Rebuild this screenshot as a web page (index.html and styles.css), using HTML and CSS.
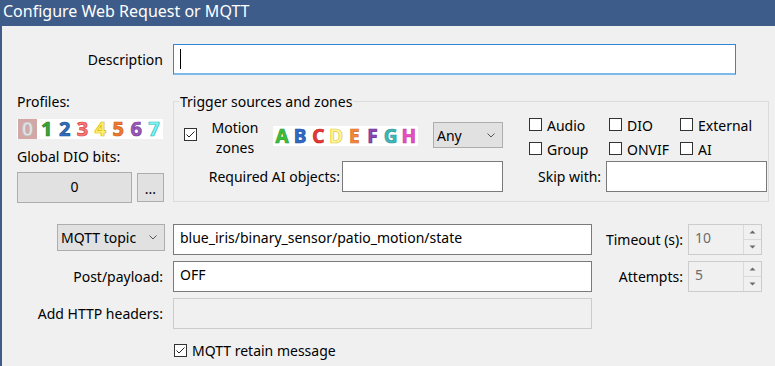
FILE: index.html
```html
<!DOCTYPE html>
<html>
<head>
<meta charset="utf-8">
<title>Configure Web Request or MQTT</title>
<link rel="stylesheet" href="styles.css">
</head>
<body>
<div class="titlebar">Configure Web Request or MQTT</div>
<div class="content">
  <div class="desc-row">
    <div class="desc-label">Description</div>
    <div class="textbox focused desc-input"><span class="caret"></span></div>
  </div>

  <div class="middle">
    <div class="left-col">
      <div class="line">Profiles:</div>
      <div class="profiles">
        <span class="pd p0">0</span><span class="pd p1">1</span><span class="pd p2">2</span><span class="pd p3">3</span><span class="pd p4">4</span><span class="pd p5">5</span><span class="pd p6">6</span><span class="pd p7">7</span>
      </div>
      <div class="line dio-label">Global DIO bits:</div>
      <div class="dio-row">
        <div class="button dio-btn">0</div>
        <div class="button dots-btn">...</div>
      </div>
    </div>

    <fieldset class="group">
      <legend>Trigger sources and zones</legend>
      <div class="grp-row1">
        <span class="checkbox motion-cb"><svg viewBox="0 0 11 11" width="11" height="11"><path d="M1.5 5.5 L4 8 L9.5 2.5" fill="none" stroke="#222" stroke-width="1"/></svg></span>
        <div class="motion-label">Motion<br>zones</div>
        <div class="zones"><span class="z za">A</span><span class="z zb">B</span><span class="z zc">C</span><span class="z zd">D</span><span class="z ze">E</span><span class="z zf">F</span><span class="z zg">G</span><span class="z zh">H</span></div>
        <div class="select any-select"><span>Any</span><svg class="chev" viewBox="0 0 8 5" width="8" height="5"><path d="M0.5 0.5 L4 4 L7.5 0.5" fill="none" stroke="#555" stroke-width="1"/></svg></div>
        <div class="cb-grid">
          <div class="cb-item"><span class="checkbox"></span><span class="cb-text">Audio</span></div>
          <div class="cb-item"><span class="checkbox"></span><span class="cb-text">DIO</span></div>
          <div class="cb-item"><span class="checkbox"></span><span class="cb-text">External</span></div>
          <div class="cb-item"><span class="checkbox"></span><span class="cb-text">Group</span></div>
          <div class="cb-item"><span class="checkbox"></span><span class="cb-text">ONVIF</span></div>
          <div class="cb-item"><span class="checkbox"></span><span class="cb-text">AI</span></div>
        </div>
      </div>
      <div class="grp-row2">
        <div class="req-label">Required AI objects:</div>
        <div class="textbox req-input"></div>
        <div class="skip-label">Skip with:</div>
        <div class="textbox skip-input"></div>
      </div>
    </fieldset>
  </div>

  <div class="form-grid">
    <div class="select topic-select"><span>MQTT topic</span><svg class="chev" viewBox="0 0 8 5" width="8" height="5"><path d="M0.5 0.5 L4 4 L7.5 0.5" fill="none" stroke="#555" stroke-width="1"/></svg></div>
    <div class="textbox">blue_iris/binary_sensor/patio_motion/state</div>
    <div class="label right-label">Timeout (s):</div>
    <div class="spin"><span class="spin-val">10</span><div class="spin-btns"><span class="spin-up"><svg viewBox="0 0 7 4" width="7" height="4"><path d="M0.5 3.5 L3.5 0.5 L6.5 3.5 Z" fill="#6a6a6a"/></svg></span><span class="spin-down"><svg viewBox="0 0 7 4" width="7" height="4"><path d="M0.5 0.5 L3.5 3.5 L6.5 0.5 Z" fill="#6a6a6a"/></svg></span></div></div>

    <div class="label">Post/payload:</div>
    <div class="textbox">OFF</div>
    <div class="label right-label">Attempts:</div>
    <div class="spin"><span class="spin-val">5</span><div class="spin-btns"><span class="spin-up"><svg viewBox="0 0 7 4" width="7" height="4"><path d="M0.5 3.5 L3.5 0.5 L6.5 3.5 Z" fill="#6a6a6a"/></svg></span><span class="spin-down"><svg viewBox="0 0 7 4" width="7" height="4"><path d="M0.5 0.5 L3.5 3.5 L6.5 0.5 Z" fill="#6a6a6a"/></svg></span></div></div>

    <div class="label">Add HTTP headers:</div>
    <div class="textbox disabled"></div>
  </div>

  <div class="retain">
    <span class="checkbox"><svg viewBox="0 0 11 11" width="11" height="11"><path d="M1.5 5.5 L4 8 L9.5 2.5" fill="none" stroke="#222" stroke-width="1"/></svg></span>
    <span class="cb-text">MQTT retain message</span>
  </div>
</div>
</body>
</html>
```

FILE: styles.css
```css
* { box-sizing: border-box; }
html, body { margin: 0; padding: 0; }
body {
  width: 775px;
  height: 366px;
  overflow: hidden;
  background: #f0f0f0;
  font-family: "Noto Sans", "Open Sans", sans-serif;
  font-size: 14px;
  color: #000;
}

.titlebar {
  height: 26px;
  background: #3e5c89;
  color: #fff;
  font-size: 16px;
  line-height: 22px;
  padding-left: 3px;
  white-space: nowrap;
}

.content {
  height: 340px;
  border-left: 2px solid #3e5c89;
}

/* generic controls */
.textbox {
  height: 31px;
  background: #fff;
  border: 1px solid #7a7a7a;
  padding: 3px 0 0 6px;
  line-height: 19px;
  white-space: nowrap;
  overflow: hidden;
}
.textbox.disabled {
  background: #f0f0f0;
  border-color: #cccccc;
}
.textbox.focused {
  border-color: #2f86d8;
  border-bottom: 2px solid #7db9ea;
  position: relative;
}
.caret {
  display: block;
  width: 1px;
  height: 20px;
  margin-top: 0px;
  background: #000;
}

.button {
  background: #e1e1e1;
  border: 1px solid #adadad;
  text-align: center;
}

.select {
  display: flex;
  align-items: flex-start;
  justify-content: space-between;
  background: #e1e1e1;
  border: 1px solid #adadad;
  padding: 3px 7px 0 3px;
  line-height: 19px;
  white-space: nowrap;
}
.select .chev { margin-top: 7px; }

.checkbox {
  display: inline-flex;
  align-items: center;
  justify-content: center;
  width: 13px;
  height: 13px;
  border: 1px solid #333;
  background: #fff;
  flex: none;
}
.checkbox svg { display: block; }

/* description row */
.desc-row {
  display: flex;
  padding-top: 18px;
}
.desc-label {
  width: 161px;
  text-align: right;
  padding-top: 6px;
  line-height: 19px;
}
.desc-input {
  margin-left: 10px;
  width: 563px;
  padding-left: 6px;
  padding-top: 4px;
}

/* middle */
.middle {
  display: flex;
  align-items: flex-start;
  margin-top: 17px;
}
.left-col {
  margin-left: 15px;
  width: 147px;
}
.line {
  line-height: 19px;
  white-space: nowrap;
}
.profiles {
  display: flex;
  width: 146px;
  height: 20px;
  margin-top: 8px;
  background: #fff;
}
.pd {
  width: 18.1px;
  text-align: center;
  font-weight: bold;
  font-size: 20px;
  line-height: 20px;
  -webkit-text-stroke: 0.7px currentColor;
}
.p0 { width: 19px; margin-left: 1px; margin-right: 1px; background: #d4a7a7; color: #e4e4e4; -webkit-text-stroke: 0.7px #b9b9b9; }
.p1 { color: #3aa63a; -webkit-text-stroke-color: #1f7f1f; }
.p2 { color: #2f6fc0; -webkit-text-stroke-color: #1d4c8c; }
.p3 { color: #f47a7a; -webkit-text-stroke-color: #e03a3a; }
.p4 { color: #fff070; -webkit-text-stroke-color: #d8b800; }
.p5 { color: #f07a30; -webkit-text-stroke-color: #d05a10; }
.p6 { color: #9a5ab8; -webkit-text-stroke-color: #7a3a98; }
.p7 { color: #7ff4f4; -webkit-text-stroke-color: #30c0c0; }

.dio-label { margin-top: 8px; }
.dio-row {
  display: flex;
  margin-top: 6px;
}
.dio-btn {
  width: 115px;
  height: 31px;
  line-height: 27px;
}
.dots-btn {
  width: 27px;
  height: 29px;
  margin-left: 5px;
  margin-top: 1px;
  line-height: 30px;
}

/* group box */
.group {
  width: 596px;
  margin: 0 0 0 9px;
  padding: 0 0 9px 0;
  border: 1px solid #dcdcdc;
  min-inline-size: 0;
}
.group legend {
  margin-left: 5px;
  padding: 0 1px;
  line-height: 19px;
}
.grp-row1 {
  display: flex;
  align-items: flex-start;
  height: 50px;
}
.motion-cb {
  margin-left: 10px;
  margin-top: 17px;
}
.motion-label {
  margin-left: 14px;
  margin-top: 7px;
  width: 48px;
  text-align: center;
  line-height: 20px;
}
.zones {
  display: flex;
  margin-left: 14px;
  margin-top: 15px;
  width: 145px;
  height: 20px;
  background: #fff;
}
.z {
  width: 18.1px;
  text-align: center;
  font-weight: bold;
  font-size: 19px;
  line-height: 20px;
  -webkit-text-stroke: 0.7px currentColor;
}
.za { color: #3cc03c; -webkit-text-stroke-color: #2a9a2a; }
.zb { color: #2f6cc8; -webkit-text-stroke-color: #1f4ea0; }
.zc { color: #e83838; -webkit-text-stroke-color: #c82020; }
.zd { color: #fff7a0; -webkit-text-stroke-color: #e0c830; }
.ze { color: #f08a40; -webkit-text-stroke-color: #d86a20; }
.zf { color: #8a4ab0; -webkit-text-stroke-color: #6a2a90; }
.zg { color: #40b8b8; -webkit-text-stroke-color: #2a9898; }
.zh { color: #e850c0; -webkit-text-stroke-color: #c830a0; }

.any-select {
  margin-left: 15px;
  margin-top: 11px;
  width: 70px;
  height: 26px;
}
.cb-grid {
  display: grid;
  grid-template-columns: 80px 71px 80px;
  grid-auto-rows: 24px;
  margin-left: 26px;
  margin-top: 3px;
}
.cb-item {
  display: flex;
  align-items: flex-start;
}
.cb-item .checkbox { margin-top: 4px; }
.cb-text {
  margin-left: 5px;
  padding-top: 2px;
  line-height: 19px;
  white-space: nowrap;
}

.grp-row2 {
  display: flex;
  height: 31px;
}
.req-label {
  width: 166px;
  text-align: right;
  padding-top: 6px;
  line-height: 19px;
  white-space: nowrap;
}
.req-input {
  margin-left: 2px;
  width: 161px;
}
.skip-label {
  margin-left: 35px;
  width: 64px;
  padding-top: 6px;
  line-height: 19px;
  white-space: nowrap;
}
.skip-input {
  margin-left: 4px;
  width: 161px;
}

/* bottom form */
.form-grid {
  display: grid;
  grid-template-columns: 171px 419px 96px 74px;
  grid-template-rows: 31px 31px 31px;
  row-gap: 6px;
  margin-top: 21px;
}
.label {
  text-align: right;
  padding-right: 10px;
  padding-top: 6px;
  line-height: 19px;
  white-space: nowrap;
}
.right-label { padding-right: 5px; }
.topic-select {
  justify-self: end;
  align-self: start;
  width: 108px;
  height: 27px;
  margin-right: 8px;
}
.spin {
  display: flex;
  justify-content: space-between;
  height: 31px;
  background: #f0f0f0;
  border: 1px solid #cccccc;
  color: #6d6d6d;
}
.spin-val {
  padding: 3px 0 0 6px;
  line-height: 19px;
}
.spin-btns {
  display: flex;
  flex-direction: column;
  width: 18px;
  border-left: 1px solid #dadada;
}
.spin-up, .spin-down {
  flex: 1;
  display: flex;
  align-items: center;
  justify-content: center;
}
.spin-up { border-bottom: 1px solid #dadada; }
.spin-btns svg { display: block; }

.retain {
  display: flex;
  align-items: flex-start;
  margin-top: 12px;
  padding-left: 172px;
}
.retain .checkbox { margin-top: 3px; }
.retain .cb-text { padding-top: 0; margin-left: 5px; }
```
